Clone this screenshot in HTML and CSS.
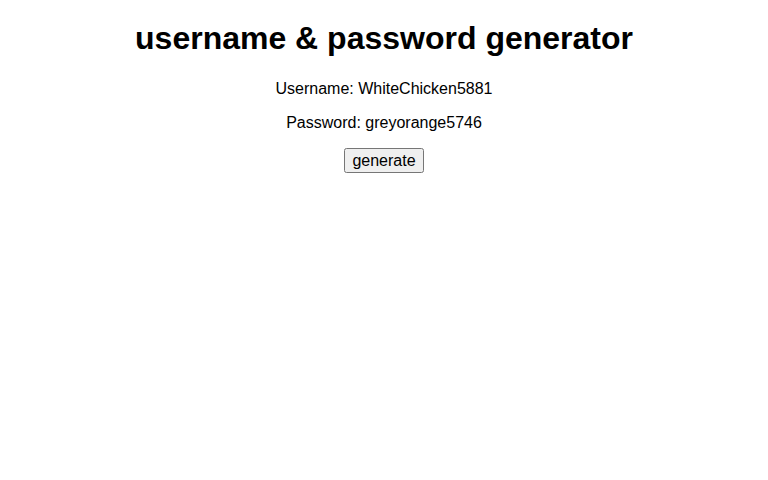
FILE: index.html
```html
<!DOCTYPE html>
<html lang="en">
<head>
    <meta charset="UTF-8">
    <meta name="viewport" content="width=device-width, initial-scale=1.0">
    <title>Username &amp; Password Generator</title>
    <link rel="stylesheet" href="styles.css">
</head>
<body>
    <div class="container">
        <h1>username &amp; password generator</h1>
        <p>Username: <span id="username">WhiteChicken5881</span></p>
        <p>Password: <span id="password">greyorange5746</span></p>
        <button id="generateBtn">generate</button>
    </div>
</body>
</html>
```

FILE: styles.css
```css
body {
    margin: 0;
    font-family: "Liberation Sans", Arial, sans-serif;
    background-color: #fff;
    color: #000;
}

.container {
    text-align: center;
}

h1 {
    font-size: 32px;
    margin: 20px 0 23px;
}

p {
    font-size: 16px;
    margin: 16px 0;
}

button {
    font-family: "Liberation Sans", Arial, sans-serif;
    font-size: 16px;
    padding: 2px 6px 1px;
}
```
